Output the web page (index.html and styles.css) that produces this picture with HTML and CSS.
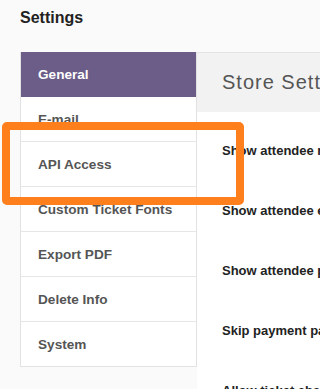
FILE: index.html
```html
<!DOCTYPE html>
<html>
<head>
<meta charset="utf-8">
<link rel="stylesheet" href="styles.css">
</head>
<body>
<h1 class="title">Settings</h1>
<div class="layout">
  <nav class="sidebar">
    <div class="nav-item active">General</div>
    <div class="nav-item">E-mail</div>
    <div class="nav-item">API Access</div>
    <div class="nav-item">Custom Ticket Fonts</div>
    <div class="nav-item">Export PDF</div>
    <div class="nav-item">Delete Info</div>
    <div class="nav-item">System</div>
  </nav>
  <section class="content">
    <div class="content-header">Store Settings</div>
    <div class="rows">
      <div class="row">Show attendee names on tickets</div>
      <div class="row">Show attendee email on tickets</div>
      <div class="row">Show attendee phone on tickets</div>
      <div class="row">Skip payment page for free orders</div>
      <div class="row">Allow ticket changes</div>
    </div>
  </section>
</div>
<div class="highlight"></div>
</body>
</html>
```
FILE: styles.css
```css
html, body {
  margin: 0;
  padding: 0;
}
body {
  background: #fafafa;
  font-family: "Liberation Sans", Arial, sans-serif;
  width: 320px;
  height: 389px;
  overflow: hidden;
  position: relative;
}
.title {
  margin: 0;
  padding: 8px 20px 0;
  height: 52px;
  box-sizing: border-box;
  font-size: 16px;
  line-height: 19px;
  font-weight: bold;
  color: #222;
}
.layout {
  display: flex;
  align-items: stretch;
  margin-left: 20px;
  width: 300px;
  height: 337px;
  overflow: hidden;
}
.sidebar {
  width: 177px;
  height: 315px;
  flex: none;
  box-sizing: border-box;
  border: 1px solid #e2e2e2;
  border-top: none;
  background: #fff;
}
.nav-item {
  height: 45px;
  box-sizing: border-box;
  border-bottom: 1px solid #e6e6e6;
  padding-left: 17px;
  display: flex;
  align-items: center;
  font-size: 13.6px;
  font-weight: bold;
  color: #555;
  white-space: nowrap;
}
.nav-item:last-child {
  border-bottom: none;
}
.nav-item.active {
  background: #6b5c88;
  color: #fff;
  border-bottom: none;
}
.content {
  flex: 1;
  min-width: 0;
  background: #fff;
  border-top: 1px solid #e4e4e4;
  overflow: hidden;
}
.content-header {
  height: 59px;
  background: #f2f2f2;
  display: flex;
  align-items: center;
  padding-left: 25px;
  font-size: 20px;
  letter-spacing: 1px;
  color: #555;
  white-space: nowrap;
}
.rows {
  padding-top: 8px;
  padding-left: 25px;
}
.row {
  height: 60px;
  display: flex;
  align-items: center;
  font-size: 13px;
  font-weight: bold;
  color: #222;
  white-space: nowrap;
}
.highlight {
  position: absolute;
  z-index: 2;
  left: 2px;
  top: 122px;
  width: 242px;
  height: 83px;
  box-sizing: border-box;
  border: 8px solid #ff7f1c;
  border-radius: 5px;
}
```
